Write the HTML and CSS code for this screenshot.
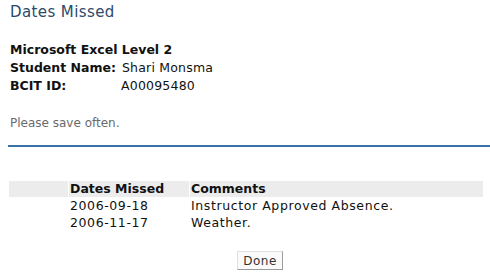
FILE: index.html
```html
<!DOCTYPE html>
<html>
<head>
<meta charset="utf-8">
<link rel="stylesheet" href="styles.css">
</head>
<body>
<div class="page">
  <h1 class="title">Dates Missed</h1>
  <div class="info">
    <div class="course">Microsoft Excel Level 2</div>
    <div class="row"><span class="label lbl-name">Student Name:</span><span class="val">Shari Monsma</span></div>
    <div class="row"><span class="label lbl-id">BCIT ID:</span><span class="val">A00095480</span></div>
  </div>
  <p class="note">Please save often.</p>
  <div class="rule"></div>
  <table class="dates">
    <thead>
      <tr><th class="blank"></th><th class="c-date">Dates Missed</th><th class="c-comment">Comments</th></tr>
    </thead>
    <tbody>
      <tr><td class="blank"></td><td>2006-09-18</td><td>Instructor Approved Absence.</td></tr>
      <tr><td class="blank"></td><td>2006-11-17</td><td>Weather.</td></tr>
    </tbody>
  </table>
  <div class="actions"><button class="btn">Done</button></div>
</div>
</body>
</html>
```
FILE: styles.css
```css
html, body { margin: 0; padding: 0; background: #fff; }
body { font-family: "DejaVu Sans", Verdana, sans-serif; font-size: 12.5px; color: #111; }
.page { padding: 3px 0 0 10px; }
.title { margin: 0; font-size: 15px; font-weight: normal; color: #2d4a69; line-height: 18px; letter-spacing: 0.4px; }
.info { margin-top: 20px; line-height: 18px; }
.course, .label { font-weight: bold; }
.val { letter-spacing: 0.2px; }
.lbl-name { margin-right: 6px; }
.lbl-id { display: inline-block; width: 111px; }
.note { margin: 20px 0 0; color: #6a6a6a; font-size: 12px; line-height: 16px; }
.rule { margin: 14px 0 0 -2px; height: 2px; background: #3a72a6; }
.dates { margin-top: 34px; width: 476px; border-collapse: separate; border-spacing: 1px 0; margin-left: -2px; }
.dates th, .dates td { text-align: left; padding: 0 1px; }
.dates th { background: #ececec; font-weight: bold; height: 16px; line-height: 16px; }
.dates td { letter-spacing: 0.6px; padding-top: 1px; height: 16px; line-height: 16px; }
.dates .blank { width: 57px; }
.c-date { width: 118px; }
.actions { text-align: center; margin-top: 20px; padding-left: 20px; }
.btn { font-family: "DejaVu Sans", Verdana, sans-serif; font-size: 12px; letter-spacing: 0.5px; background: #fafafa; border: 1px solid #9a9a9a; border-top-color: #e0e0e0; border-left-color: #e0e0e0; padding: 0 5px; height: 19px; color: #333; }
```
